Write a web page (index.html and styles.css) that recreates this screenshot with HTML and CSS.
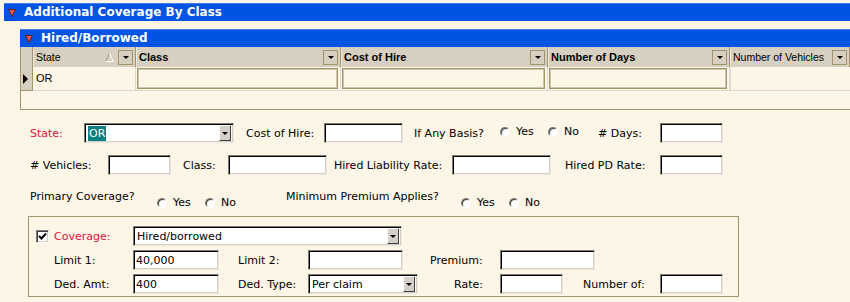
FILE: index.html
```html
<!DOCTYPE html>
<html>
<head>
<meta charset="utf-8">
<title>Additional Coverage By Class</title>
<link rel="stylesheet" href="styles.css">
</head>
<body>
<div class="bar bar-main">
  <svg class="tri" width="8" height="8" viewBox="0 0 8 8"><path d="M0.5 0.5H7.5L4 7.5Z" fill="#d4585a" stroke="#6e1a1a" stroke-width="1"/></svg>
  <span>Additional Coverage By Class</span>
</div>

<div class="sub">
  <div class="bar bar-sub">
    <svg class="tri" width="8" height="8" viewBox="0 0 8 8"><path d="M0.5 0.5H7.5L4 7.5Z" fill="#d4585a" stroke="#6e1a1a" stroke-width="1"/></svg>
    <span>Hired/Borrowed</span>
  </div>
  <div class="grid">
    <div class="grow ghead">
      <div class="gsel"></div>
      <div class="gh c-state">
        <span class="gh-text">State</span>
        <svg class="sort" width="9" height="9" viewBox="0 0 9 9"><path d="M4.5 0.5L0.5 8.5" stroke="#a39b88" fill="none"/><path d="M4.5 0.5L8.5 8.5H0.5" stroke="#ffffff" fill="none"/></svg>
        <span class="ddbtn"><span class="caret"></span></span>
      </div>
      <div class="gh c-class bold"><span class="gh-text">Class</span><span class="ddbtn"><span class="caret"></span></span></div>
      <div class="gh c-cost bold"><span class="gh-text">Cost of Hire</span><span class="ddbtn"><span class="caret"></span></span></div>
      <div class="gh c-days bold"><span class="gh-text">Number of Days</span><span class="ddbtn"><span class="caret"></span></span></div>
      <div class="gh c-veh"><span class="gh-text">Number of Vehicles</span><span class="ddbtn"><span class="caret"></span></span></div>
    </div>
    <div class="grow gdata">
      <div class="gsel"><svg width="5" height="10" viewBox="0 0 5 10"><path d="M0 0L5 5L0 10Z" fill="#000"/></svg></div>
      <div class="gd c-state">OR</div>
      <div class="gd c-class boxed"><span class="cellbox"></span></div>
      <div class="gd c-cost boxed"><span class="cellbox"></span></div>
      <div class="gd c-days boxed"><span class="cellbox"></span></div>
      <div class="gd c-veh"></div>
    </div>
    <div class="gempty"></div>
  </div>
</div>

<div class="form">
  <div class="frow r1">
    <span class="lbl red w54">State:</span>
    <span class="sel w150"><span class="val"><span class="hl">OR</span></span><span class="ddb"><span class="caret"></span></span></span>
    <span class="lbl ml12 w78">Cost of Hire:</span>
    <span class="tb w79"></span>
    <span class="lbl ml11 w86">If Any Basis?</span>
    <span class="rg up">
      <span class="opt first"><span class="rd"></span>Yes</span>
      <span class="opt"><span class="rd"></span>No</span>
    </span>
    <span class="lbl ml19 w62">#&nbsp;Days:</span>
    <span class="tb w63"></span>
  </div>

  <div class="frow r2">
    <span class="lbl w78">#&nbsp;Vehicles:</span>
    <span class="tb w63"></span>
    <span class="lbl ml12 w45">Class:</span>
    <span class="tb w99"></span>
    <span class="lbl ml7 w118">Hired Liability Rate:</span>
    <span class="tb w99"></span>
    <span class="lbl ml14 w95">Hired PD Rate:</span>
    <span class="tb w63"></span>
  </div>

  <div class="frow r3">
    <span class="lbl w127">Primary Coverage?</span>
    <span class="rg down">
      <span class="opt first"><span class="rd"></span>Yes</span>
      <span class="opt"><span class="rd"></span>No</span>
    </span>
    <span class="lbl ml50 w175">Minimum Premium Applies?</span>
    <span class="rg down">
      <span class="opt first"><span class="rd"></span>Yes</span>
      <span class="opt"><span class="rd"></span>No</span>
    </span>
  </div>

  <div class="cov">
    <div class="brow">
      <span class="cb"><svg width="9" height="9" viewBox="0 0 9 9"><path d="M1 4L3.5 6.5L8 1.5" stroke="#000" stroke-width="2" fill="none"/></svg></span>
      <span class="lbl red ml5 w79">Coverage:</span>
      <span class="sel w269"><span class="val">Hired/borrowed</span><span class="ddb"><span class="caret"></span></span></span>
    </div>
    <div class="brow">
      <span class="lbl ml18 w79">Limit 1:</span>
      <span class="tb w86">40,000</span>
      <span class="lbl ml19 w70">Limit 2:</span>
      <span class="tb w95"></span>
      <span class="lbl ml27 w70">Premium:</span>
      <span class="tb w95"></span>
    </div>
    <div class="brow">
      <span class="lbl ml18 w79">Ded. Amt:</span>
      <span class="tb w86">400</span>
      <span class="lbl ml19 w70">Ded. Type:</span>
      <span class="sel w110"><span class="val">Per claim</span><span class="ddb"><span class="caret"></span></span></span>
      <span class="lbl ml36 w46">Rate:</span>
      <span class="tb w63"></span>
      <span class="lbl ml20 w77">Number of:</span>
      <span class="tb w63"></span>
    </div>
  </div>
</div>
</body>
</html>
```

FILE: styles.css
```css
* { box-sizing: border-box; }

body {
  margin: 0;
  width: 850px;
  height: 302px;
  overflow: hidden;
  background: #fdf5e6;
  color: #000;
  font-family: "DejaVu Sans", Verdana, sans-serif;
  font-size: 11px;
  line-height: 13px;
}

/* ---------- title bars ---------- */
.bar {
  display: flex;
  align-items: center;
  height: 18px;
  background: #0054e3;
  border-top: 1px solid #3d80f2;
  color: #fff;
  font-weight: bold;
  font-size: 12px;
  white-space: nowrap;
}
.bar .tri { display: block; flex: none; margin-right: 8px; }
.bar-main { margin: 3px 0 0 4px; padding-left: 4px; }
.bar-sub { padding-left: 5px; }

.sub { margin: 8px 0 0 20px; }

/* ---------- grid ---------- */
.grid {
  border-left: 1px solid #a3946f;
  border-bottom: 1px solid #a3946f;
  font-family: "Liberation Sans", Arial, sans-serif;
  font-size: 11px;
}
.grow { display: flex; white-space: nowrap; }
.ghead { height: 20px; background: #d7cfbf; }
.gsel {
  flex: none;
  width: 12px;
  border-right: 1px solid #a3946f;
  background: #d7cfbf;
  display: flex;
  align-items: center;
  padding-left: 2px;
}
.gdata .gsel { border-bottom: 1px solid #a3946f; }

.c-state { width: 103px; flex: none; }
.c-class { width: 205px; flex: none; }
.c-cost { width: 207px; flex: none; }
.c-days { width: 182px; flex: none; }
.c-veh { flex: 1; }

.gh {
  display: flex;
  align-items: center;
  padding-left: 3px;
  border-right: 1px solid #a3946f;
  box-shadow: inset 1px 0 #efe9dc;
  font-size: 10.5px;
}
.gh.bold { font-size: 11px; font-weight: bold; }
.gh-text { flex: 1; }
.sort { display: block; margin-right: 4px; }
.ddbtn {
  flex: none;
  width: 15px;
  height: 15px;
  margin-right: 2px;
  border: 1px solid #a3946f;
  display: flex;
  align-items: center;
  justify-content: center;
}
.caret {
  display: block;
  width: 0;
  height: 0;
  border-left: 3px solid transparent;
  border-right: 3px solid transparent;
  border-top: 3px solid #000;
}

.gdata { height: 24px; }
.gd {
  border-right: 1px solid #dcdad4;
  border-bottom: 1px solid #dcdad4;
  display: flex;
  align-items: center;
  padding-left: 3px;
}
.gd.boxed { padding: 1px 2px 1px 1px; border-color: transparent #dcdad4 #dcdad4 transparent; }
.cellbox {
  display: block;
  width: 100%;
  height: 100%;
  border: 1px solid #a3946f;
  box-shadow: inset 1px 1px #d0c6ae, inset -1px -1px #d0c6ae;
}
.c-veh.gd { border-right: none; border-left: 1px solid #dcdad4; }
.gempty { height: 18px; }

/* ---------- form ---------- */
.form { margin-top: 13px; }
.frow {
  display: flex;
  align-items: center;
  height: 20px;
  padding-left: 30px;
  white-space: nowrap;
}
.r2 { margin-top: 12px; }
.r3 { margin-top: 15px; align-items: flex-start; }

.lbl { flex: none; display: block; }
.red { color: #dc143c; }

.tb, .sel {
  flex: none;
  height: 20px;
  background: #fff;
  border: 1px solid;
  border-color: #7a7a7a #ece8df #ece8df #7a7a7a;
  box-shadow: inset 1px 1px #000, inset -1px -1px #d4d0c8;
  display: flex;
  align-items: center;
  padding: 1px 2px 0 2px;
  overflow: hidden;
}
.sel { padding: 2px 2px 2px 2px; }
.sel .val { flex: 1; padding-left: 1px; }
.hl { background: #0a8080; color: #fff; padding: 1px 1px; }
.ddb {
  flex: none;
  width: 12px;
  height: 16px;
  background: #d4d0c8;
  border: 1px solid;
  border-color: #fff #404040 #404040 #fff;
  display: flex;
  align-items: center;
  justify-content: center;
}

.rg { display: flex; align-items: center; flex: none; }
.rg.up { margin-top: -3px; }
.rg.down { margin-top: 6px; }
.opt { display: flex; align-items: center; }
.opt.first { width: 48px; }
.rd {
  flex: none;
  width: 10px;
  height: 10px;
  margin-right: 6px;
  border-radius: 50%;
  background: #fff;
  border: 1px solid;
  border-color: #7a7a7a #fff #fff #7a7a7a;
  box-shadow: inset 1px 1px #404040;
}

.cb {
  flex: none;
  width: 13px;
  height: 13px;
  background: #fff;
  border: 1px solid;
  border-color: #7a7a7a #fff #fff #7a7a7a;
  box-shadow: inset 1px 1px #404040, inset -1px -1px #d4d0c8;
  display: flex;
  align-items: center;
  justify-content: center;
}

/* coverage group box */
.cov {
  margin: 6px 0 0 28px;
  width: 711px;
  border: 1px solid #a3946f;
  padding: 9px 0 2px 7px;
}
.brow { display: flex; align-items: center; height: 20px; white-space: nowrap; }
.brow + .brow { margin-top: 4px; }

/* sizes */
.w45 { width: 45px; } .w46 { width: 46px; } .w54 { width: 54px; }
.w62 { width: 62px; } .w63 { width: 63px; } .w70 { width: 70px; }
.w77 { width: 77px; } .w78 { width: 78px; } .w79 { width: 79px; }
.w86 { width: 86px; } .w95 { width: 95px; } .w99 { width: 99px; }
.w110 { width: 110px; } .w118 { width: 118px; } .w127 { width: 127px; }
.w150 { width: 150px; } .w175 { width: 175px; } .w269 { width: 269px; }

.ml5 { margin-left: 5px; } .ml7 { margin-left: 7px; } .ml11 { margin-left: 11px; }
.ml12 { margin-left: 12px; } .ml14 { margin-left: 14px; } .ml18 { margin-left: 18px; }
.ml19 { margin-left: 19px; } .ml20 { margin-left: 20px; } .ml27 { margin-left: 27px; }
.ml36 { margin-left: 36px; } .ml50 { margin-left: 50px; }
```
